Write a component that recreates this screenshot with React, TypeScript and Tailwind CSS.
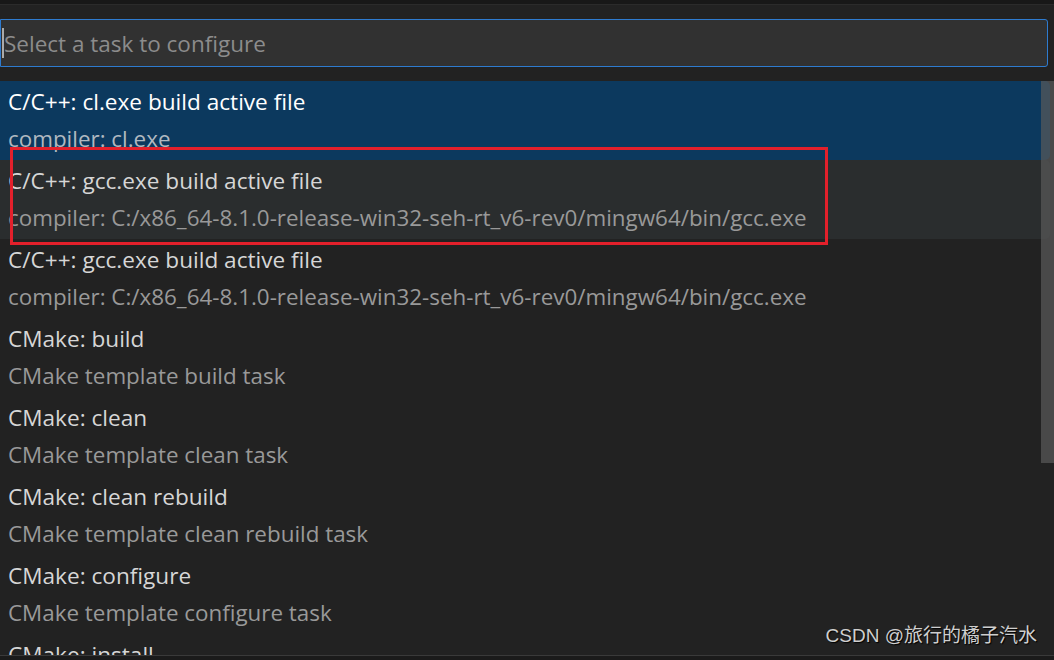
import React from "react";

const tasks = [
  { title: "C/C++: cl.exe build active file", desc: "compiler: cl.exe", state: "selected" },
  {
    title: "C/C++: gcc.exe build active file",
    desc: "compiler: C:/x86_64-8.1.0-release-win32-seh-rt_v6-rev0/mingw64/bin/gcc.exe",
    state: "hover",
  },
  {
    title: "C/C++: gcc.exe build active file",
    desc: "compiler: C:/x86_64-8.1.0-release-win32-seh-rt_v6-rev0/mingw64/bin/gcc.exe",
  },
  { title: "CMake: build", desc: "CMake template build task" },
  { title: "CMake: clean", desc: "CMake template clean task" },
  { title: "CMake: clean rebuild", desc: "CMake template clean rebuild task" },
  { title: "CMake: configure", desc: "CMake template configure task" },
  { title: "CMake: install", desc: "CMake template install task" },
];

export default function App() {
  return (
    <div
      className="relative h-[660px] w-[1054px] overflow-hidden bg-[#181818]"
      style={{ fontFamily: '"Open Sans", "Noto Sans", sans-serif' }}
    >
      <div className="mt-[4px] flex h-[651px] flex-col border-t border-[#2b2b2b] bg-[#222222]">
        {/* input */}
        <div className="pt-[14px] pr-[6px] pb-[14px]">
          <div className="flex h-[48px] items-center rounded-r-[3px] border border-[#2e7bcf] bg-[#313131] pl-[1px]">
            <span className="h-[30px] w-[2px] bg-[#aaaaaa]" />
            <span className="pt-[2px] text-[22.5px] leading-none text-[#8c8c8c]">Select a task to configure</span>
          </div>
        </div>

        {/* list */}
        <div className="relative flex-1 overflow-hidden">
          {tasks.map((t, i) => (
            <div
              key={i}
              className={
                "mr-[4px] flex h-[79px] flex-col pl-[8px] pt-[2px] " +
                (t.state === "selected"
                  ? "rounded-r-[5px] bg-[#0c395e]"
                  : t.state === "hover"
                  ? "rounded-r-[5px] bg-[#2a2d2e]"
                  : "")
              }
            >
              <div
                className={
                  "whitespace-nowrap text-[22.6px] leading-[37px] " +
                  (t.state === "selected" ? "text-white" : "text-[#d6d6d6]")
                }
              >
                {t.title}
              </div>
              <div
                className={
                  "whitespace-nowrap text-[22.4px] leading-[37px] " +
                  (t.state === "selected" ? "text-[#b0b8c0]" : "text-[#999999]")
                }
              >
                {t.desc}
              </div>
            </div>
          ))}

          {/* scrollbar thumb */}
          <div className="absolute top-0 right-0 h-[382px] w-[13px] bg-[#5a5a5a]/70" />

          {/* red annotation box */}
          <div className="absolute top-[66px] left-[10px] h-[98px] w-[818px] border-[3px] border-[#e3202b]" />

          {/* watermark */}
          <div
            className="absolute right-[17px] bottom-[5px] text-[19px] text-[#cfcfcf]"
            style={{
              fontFamily: '"Liberation Sans", "Noto Sans CJK SC", sans-serif',
              textShadow: "1px 1px 1px #000",
            }}
          >
            CSDN @旅行的橘子汽水
          </div>
        </div>
      </div>
      <div className="h-[5px] border-t border-[#3a3a3a] bg-[#1b1b1b]" />
    </div>
  );
}
